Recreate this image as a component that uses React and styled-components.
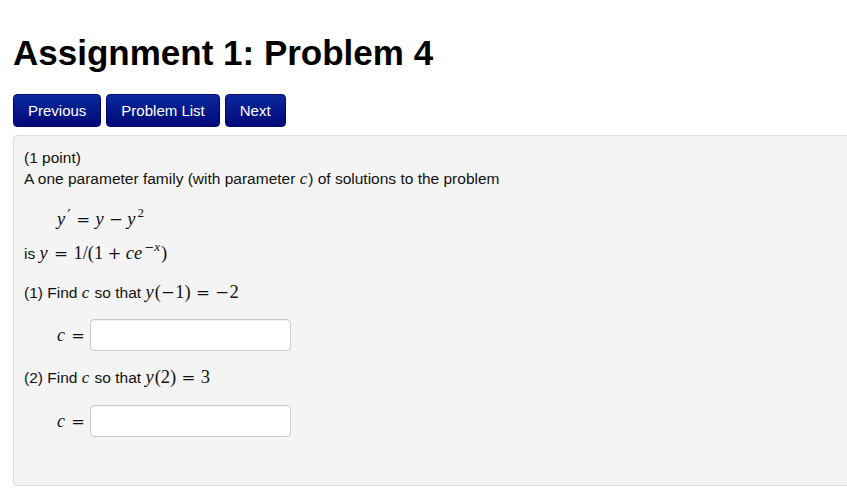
import styled, { createGlobalStyle } from "styled-components";

const GlobalStyle = createGlobalStyle`
  html, body {
    margin: 0;
    padding: 0;
    background: #fff;
    overflow: hidden;
  }
  body {
    font-family: "Liberation Sans", Arial, sans-serif;
    font-size: 15.5px;
    line-height: 20px;
    color: #111;
  }
`;

const Page = styled.div`
  padding: 0 0 0 13px;
  width: 900px;
`;

const Title = styled.h1`
  margin: 33px 0 21px;
  font-size: 35px;
  line-height: 40px;
  font-weight: bold;
  color: #000;
`;

const Nav = styled.div`
  display: flex;
  gap: 5px;
`;

const NavButton = styled.button`
  font-family: "Liberation Sans", Arial, sans-serif;
  font-size: 15px;
  line-height: 19px;
  padding: 6px 14px;
  color: #fff;
  border: 1px solid #000a66;
  border-radius: 4px;
  background: linear-gradient(to bottom, #0b2a9c, #000878);
  cursor: pointer;
`;

const Panel = styled.div`
  margin-top: 8px;
  padding: 12px 10px;
  width: 880px;
  background: #f4f4f4;
  border: 1px solid #dcdcdc;
  border-radius: 4px;
`;

const Line = styled.div`
  margin-top: ${(p) => p.$gap || 0}px;
  padding-left: ${(p) => p.$indent || 0}px;
  line-height: ${(p) => p.$lh || 20}px;
  height: ${(p) => (p.$lh ? `${p.$lh}px` : "auto")};
`;

const Math = styled.span`
  font-family: "Liberation Serif", "DejaVu Serif", serif;
  font-size: ${(p) => p.$size || 18.5}px;
  white-space: nowrap;
`;

const V = styled.i`
  font-style: italic;
  padding-right: 1px;
`;

/* operator box sized like TeX: glyph plus the space round it */
const Op = styled.span`
  display: inline-block;
  font-family: "DejaVu Serif", serif;
  font-size: 0.9em;
  width: ${(p) => (p.$rel ? 1.48 : p.$tight ? 0.86 : 1.36)}em;
  text-align: center;
`;

const Sup = styled.sup`
  font-size: 0.7em;
  line-height: 0;
  vertical-align: 0.6em;
  margin-left: 1px;
`;

const Prime = styled.span`
  font-family: "DejaVu Serif", serif;
  font-size: 0.85em;
  line-height: 0;
  vertical-align: 0.25em;
  margin-left: 1px;
`;

const AnswerRow = styled.div`
  display: flex;
  align-items: center;
  margin-top: ${(p) => p.$gap || 0}px;
  margin-bottom: ${(p) => p.$after || 0}px;
  padding-left: 33px;
  height: 32px;
`;

const AnswerInput = styled.input`
  box-sizing: border-box;
  width: 201px;
  height: 32px;
  padding: 4px 6px;
  font-size: 14px;
  background: #fff;
  border: 1px solid #ccc;
  border-radius: 4px;
  box-shadow: inset 0 1px 1px rgba(0, 0, 0, 0.06);
`;

function App() {
  return (
    <Page>
      <GlobalStyle />
      <Title>Assignment 1: Problem 4</Title>
      <Nav>
        <NavButton>Previous</NavButton>
        <NavButton>Problem List</NavButton>
        <NavButton>Next</NavButton>
      </Nav>
      <Panel>
        <Line>(1 point)</Line>
        <Line $gap={1}>
          A one parameter family (with parameter{" "}
          <Math $size={17}>
            <V>c</V>
          </Math>
          ) of solutions to the problem
        </Line>
        <Line $gap={18} $indent={33} $lh={24}>
          <Math>
            <V>y</V>
            <Prime>′</Prime>
            <Op $rel>=</Op>
            <V>y</V>
            <Op>−</Op>
            <V>y</V>
            <Sup>2</Sup>
          </Math>
        </Line>
        <Line $gap={10} $lh={24}>
          is{" "}
          <Math>
            <V>y</V>
            <Op $rel>=</Op>1/(1<Op>+</Op>
            <V>ce</V>
            <Sup>
              <Op $tight>−</Op>
              <V>x</V>
            </Sup>
            )
          </Math>
        </Line>
        <Line $gap={15} $lh={24}>
          (1) Find{" "}
          <Math $size={17}>
            <V>c</V>
          </Math>{" "}
          so that{" "}
          <Math>
            <V>y</V>(<Op $tight>−</Op>1)<Op $rel>=</Op>
            <Op $tight>−</Op>2
          </Math>
        </Line>
        <AnswerRow $gap={15}>
          <Math $size={18}>
            <V>c</V>
            <Op $rel>=</Op>
          </Math>
          <AnswerInput type="text" />
        </AnswerRow>
        <Line $gap={14} $lh={24}>
          (2) Find{" "}
          <Math $size={17}>
            <V>c</V>
          </Math>{" "}
          so that{" "}
          <Math>
            <V>y</V>(2)<Op $rel>=</Op>3
          </Math>
        </Line>
        <AnswerRow $gap={16} $after={36}>
          <Math $size={18}>
            <V>c</V>
            <Op $rel>=</Op>
          </Math>
          <AnswerInput type="text" />
        </AnswerRow>
      </Panel>
    </Page>
  );
}

export default App;
